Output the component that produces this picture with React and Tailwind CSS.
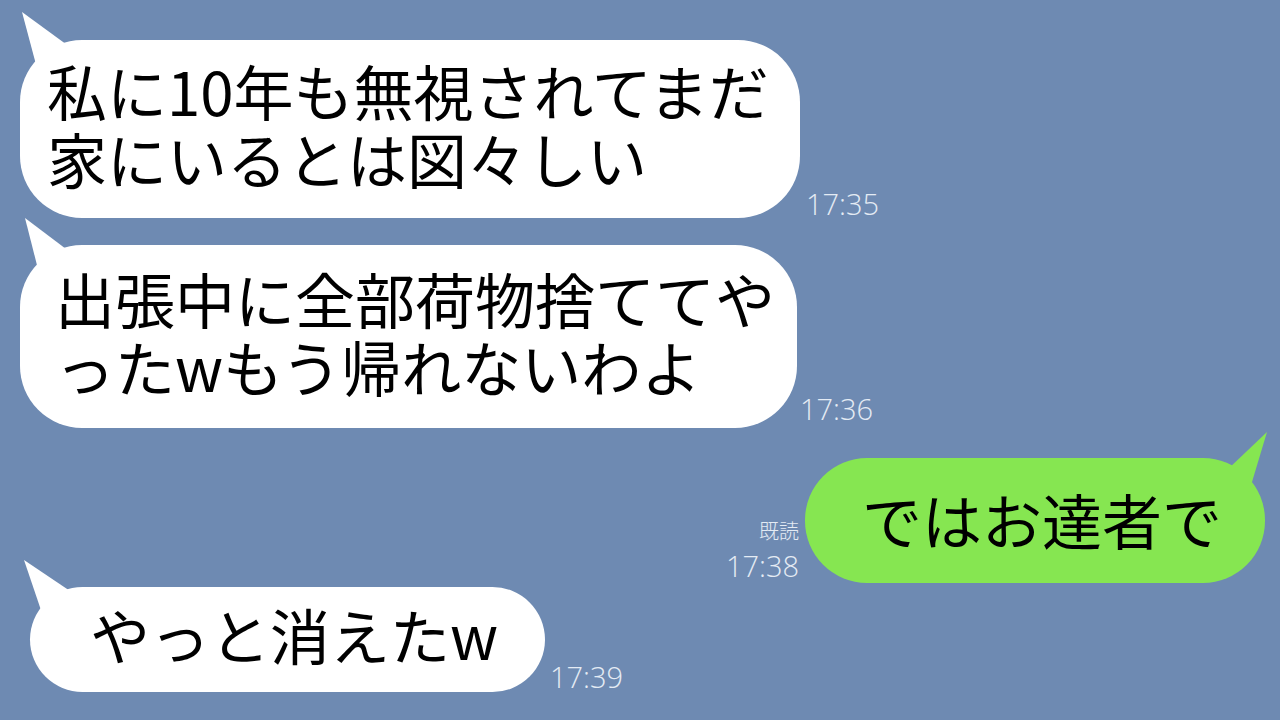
import React from "react";

const jp = { fontFamily: '"Noto Sans CJK JP", "Noto Sans", sans-serif' };
const tm = { fontFamily: '"Open Sans", "Noto Sans", sans-serif' };

function TailLeft({ points, fill }) {
  return (
    <svg className="absolute left-0 top-0" width="100" height="100" style={{ overflow: "visible" }}>
      <polygon points={points} fill={fill} />
    </svg>
  );
}

function Time({ children, className = "" }) {
  return (
    <div
      className={"text-[29px] leading-[29px] font-light text-[#e4ebf4] whitespace-nowrap " + className}
      style={tm}
    >
      {children}
    </div>
  );
}

export default function App() {
  return (
    <div className="w-[1280px] h-[720px] bg-[#6e8ab2] overflow-hidden flex flex-col" style={jp}>
      {/* Message 1 */}
      <div className="flex items-end mt-[40px] ml-[20px]">
        <div className="relative w-[780px] h-[178px] bg-white rounded-[62px] flex flex-col justify-center pl-[27px] pb-[10px] text-black text-[60px] leading-[68px] whitespace-nowrap">
          <TailLeft points="2,-28 18,32 54,10" fill="#ffffff" />
          <div className="relative">私に10年も無視されてまだ</div>
          <div className="relative">家にいるとは図々しい</div>
        </div>
        <Time className="ml-[6px] mb-[0px]">17:35</Time>
      </div>

      {/* Message 2 */}
      <div className="flex items-end mt-[27px] ml-[20px]">
        <div className="relative w-[777px] h-[183px] bg-white rounded-[62px] flex flex-col justify-center pl-[35px] pb-[10px] text-black text-[60px] leading-[68px] whitespace-nowrap">
          <TailLeft points="5,-27 20,32 54,10" fill="#ffffff" />
          <div className="relative">出張中に全部荷物捨ててや</div>
          <div className="relative">ったwもう帰れないわよ</div>
        </div>
        <Time className="ml-[3px] mb-[5px]">17:36</Time>
      </div>

      {/* Message 3 (mine) */}
      <div className="flex items-end justify-end mt-[30px] mr-[15px]">
        <div className="flex flex-col items-end mr-[6px] mb-[3px]">
          <div className="text-[20px] leading-[20px] font-light text-[#e4ebf4] mb-[10px]" style={jp}>既読</div>
          <Time>17:38</Time>
        </div>
        <div className="relative w-[460px] h-[125px] bg-[#86e651] rounded-[62px] flex items-center pl-[57px] pb-[4px] text-black text-[60px] leading-[68px] whitespace-nowrap">
          <svg className="absolute right-0 top-0" width="100" height="100" style={{ overflow: "visible" }}>
            <polygon points="102,-26 62,12 84,34" fill="#86e651" />
          </svg>
          <div className="relative">ではお達者で</div>
        </div>
      </div>

      {/* Message 4 */}
      <div className="flex items-end mt-[4px] ml-[30px]">
        <div className="relative w-[515px] h-[105px] bg-white rounded-[53px] flex items-center pl-[60px] pb-[12px] text-black text-[60px] leading-[68px] whitespace-nowrap">
          <TailLeft points="-6,-27 14,32 46,8" fill="#ffffff" />
          <div className="relative">やっと消えたw</div>
        </div>
        <Time className="ml-[5px] mb-[1px]">17:39</Time>
      </div>
    </div>
  );
}
